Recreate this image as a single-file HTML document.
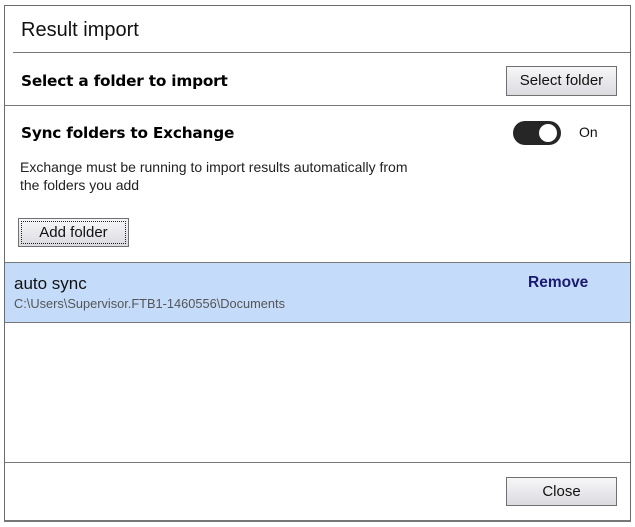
<!DOCTYPE html>
<html><head><style>
*{margin:0;padding:0;box-sizing:border-box}
body{width:635px;height:527px;background:#fff;font-family:"Liberation Sans",sans-serif;position:relative;overflow:hidden}
.win{position:absolute;left:4px;top:5px;width:627px;height:517px;border:1px solid #6b6b6b;border-bottom:2px solid #777;background:#fff}
.a{position:absolute;white-space:nowrap}
.hl{position:absolute;left:0;right:0;height:1px;background:#777}
.btn{position:absolute;border:1px solid #707070;background:linear-gradient(#f6f6f8,#dcdbe0);font-size:15px;color:#111;text-align:center}
.b{font-family:"DejaVu Sans",sans-serif;font-weight:bold;font-size:15.3px;color:#000;letter-spacing:-0.2px}
</style></head><body>
<div class="win">
 <div class="a" style="left:16px;top:13px;font-size:20px;color:#111">Result import</div>
 <div class="hl" style="top:46px;left:8px"></div>
 <div class="a b" style="left:16px;top:66px">Select a folder to import</div>
 <div class="btn" style="left:501px;top:60px;width:111px;height:30px;line-height:28px">Select folder</div>
 <div class="hl" style="top:99px"></div>
 <div class="a b" style="left:16px;top:118px">Sync folders to Exchange</div>
 <div class="a" style="left:508px;top:115px;width:48px;height:24px;border-radius:12px;background:#262626"></div>
 <div class="a" style="left:534px;top:118px;width:18px;height:18px;border-radius:9px;background:#fff"></div>
 <div class="a" style="left:574px;top:118px;font-size:14px;color:#111">On</div>
 <div class="a" style="left:15px;top:152px;font-size:14px;line-height:18px;color:#222">Exchange must be running to import results automatically from<br>the folders you add</div>
 <div class="btn" style="left:13px;top:212px;width:111px;height:29px;line-height:27px;outline:1px dotted #222;outline-offset:-4px">Add folder</div>
 <div class="a" style="left:0;right:0;top:256px;height:61px;background:#c4dcfa;border-top:1px solid #777;border-bottom:1px solid #777"></div>
 <div class="a" style="left:9px;top:268px;font-size:17px;color:#111">auto sync</div>
 <div class="a" style="left:9px;top:290px;font-size:12.8px;color:#555">C:\Users\Supervisor.FTB1-1460556\Documents</div>
 <div class="a" style="left:523px;top:268px;font-size:15.5px;font-weight:bold;color:#1a1a70">Remove</div>
 <div class="hl" style="top:456px"></div>
 <div class="btn" style="left:501px;top:471px;width:111px;height:29px;line-height:27px">Close</div>
</div>
</body></html>
